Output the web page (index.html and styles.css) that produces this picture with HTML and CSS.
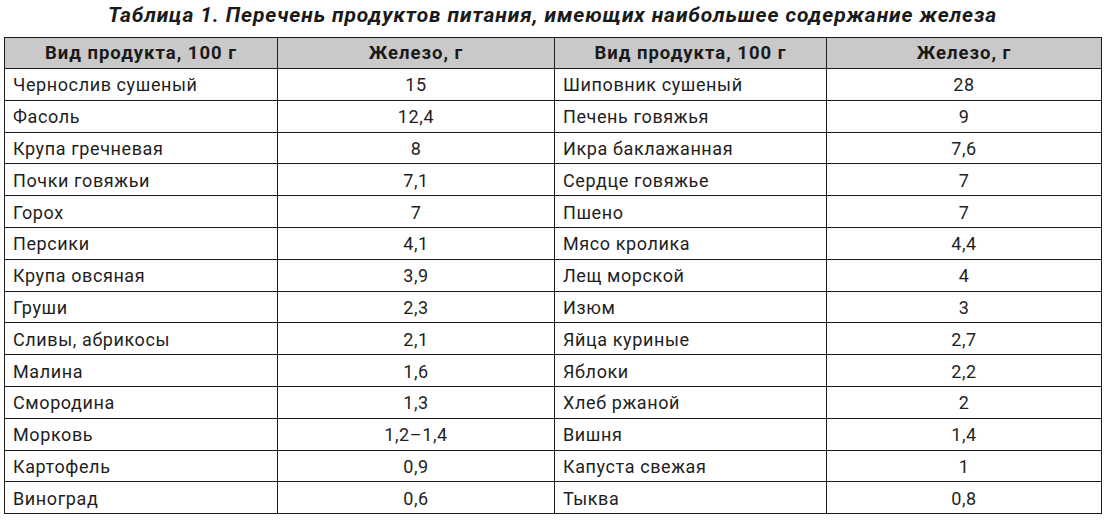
FILE: index.html
```html
<!DOCTYPE html>
<html lang="ru">
<head>
<meta charset="utf-8">
<link rel="stylesheet" href="styles.css">
</head>
<body>
<div class="page">
<div class="title">Таблица 1. Перечень продуктов питания, имеющих наибольшее содержание железа</div>
<table class="tbl">
<colgroup><col class="c1"><col class="c2"><col class="c3"><col class="c4"></colgroup>
<thead>
<tr class="hr"><th>Вид продукта, 100 г</th><th>Железо, г</th><th>Вид продукта, 100 г</th><th>Железо, г</th></tr>
</thead>
<tbody>
<tr><td>Чернослив сушеный</td><td class="n">15</td><td>Шиповник сушеный</td><td class="n">28</td></tr>
<tr><td>Фасоль</td><td class="n">12,4</td><td>Печень говяжья</td><td class="n">9</td></tr>
<tr><td>Крупа гречневая</td><td class="n">8</td><td>Икра баклажанная</td><td class="n">7,6</td></tr>
<tr><td>Почки говяжьи</td><td class="n">7,1</td><td>Сердце говяжье</td><td class="n">7</td></tr>
<tr><td>Горох</td><td class="n">7</td><td>Пшено</td><td class="n">7</td></tr>
<tr><td>Персики</td><td class="n">4,1</td><td>Мясо кролика</td><td class="n">4,4</td></tr>
<tr><td>Крупа овсяная</td><td class="n">3,9</td><td>Лещ морской</td><td class="n">4</td></tr>
<tr><td>Груши</td><td class="n">2,3</td><td>Изюм</td><td class="n">3</td></tr>
<tr><td>Сливы, абрикосы</td><td class="n">2,1</td><td>Яйца куриные</td><td class="n">2,7</td></tr>
<tr><td>Малина</td><td class="n">1,6</td><td>Яблоки</td><td class="n">2,2</td></tr>
<tr><td>Смородина</td><td class="n">1,3</td><td>Хлеб ржаной</td><td class="n">2</td></tr>
<tr><td>Морковь</td><td class="n">1,2–1,4</td><td>Вишня</td><td class="n">1,4</td></tr>
<tr><td>Картофель</td><td class="n">0,9</td><td>Капуста свежая</td><td class="n">1</td></tr>
<tr><td>Виноград</td><td class="n">0,6</td><td>Тыква</td><td class="n">0,8</td></tr>
</tbody>
</table>
</div>
</body>
</html>
```
FILE: styles.css
```css
html, body { margin: 0; padding: 0; background: #fff; }
body { font-family: Roboto, "Liberation Sans", sans-serif; color: #1e1e1e; }
.page { width: 1105px; height: 520px; padding: 0 4px 0 4px; box-sizing: border-box; }
.title {
  height: 37px;
  line-height: 30px;
  text-align: center;
  font-weight: 700;
  font-style: italic;
  font-size: 21px;
  letter-spacing: 0.9px;
  color: #1a1a1a;
}
.tbl {
  width: 1097px;
  border-collapse: collapse;
  table-layout: fixed;
  border: 1.5px solid #1a1a1a;
}
.c1 { width: 273px; }
.c2 { width: 277px; }
.c3 { width: 272px; }
.c4 { width: 275px; }
.tbl tr { height: 31.8px; }
.tbl tr.hr { height: 31px; }
.tbl th, .tbl td { border: 1.5px solid #1a1a1a; padding: 0; }
.tbl th {
  background: #c8c9c8;
  font-weight: 700;
  font-size: 18.5px;
  letter-spacing: 1px;
  text-align: center;
  color: #1a1a1a;
}
.tbl td {
  font-size: 18px;
  letter-spacing: 0.6px;
  padding-left: 8px;
  padding-top: 1px;
}
.tbl td.n { text-align: center; padding-left: 0; }
```
